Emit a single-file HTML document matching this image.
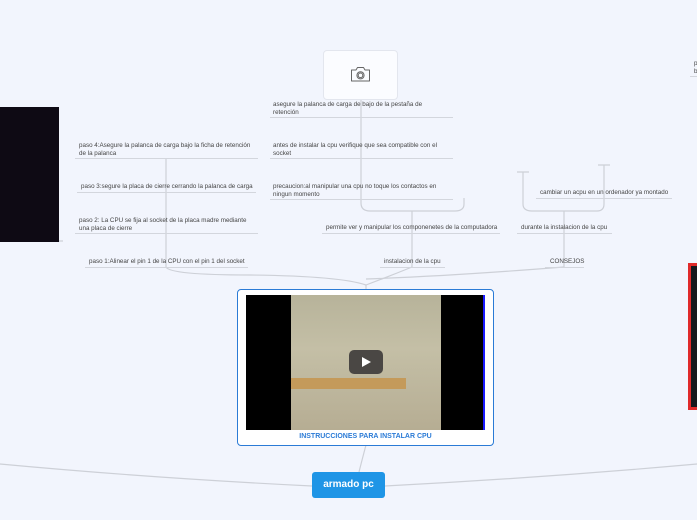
<!DOCTYPE html>
<html><head><meta charset="utf-8"><style>
body{margin:0;width:697px;height:520px;background:#f2f5fd;position:relative;overflow:hidden;font-family:"Liberation Sans",sans-serif}
.t{position:absolute;font-size:6.25px;line-height:7.5px;color:#444;white-space:nowrap}
.u{position:absolute;height:1px;background:#d3d6dd}
</style></head><body>
<svg width="697" height="520" style="position:absolute;left:0;top:0" fill="none" stroke="#cdd0d7" stroke-width="1.2">
<path d="M361 99V117M361 118V158M361 159V199"/>
<path d="M166 159V192M166 193V233M166 234V267"/>
<path d="M361 199V203Q361 211 370 211H455Q464 211 464 204V198"/>
<path d="M412 211V233M412 234V267"/>
<path d="M523 172V204Q523 211 532 211H597Q604 211 604 204V165M517 172H529M598 165H610"/>
<path d="M564 211V233M564 234V267"/>
<path d="M166 267Q170 275 250 275Q340 276 366 285Q390 276 412 267"/>
<path d="M366 279Q450 276 564 267"/>
<path d="M366 285V290"/>
<path d="M0 464Q150 478 312 486M385 486Q540 478 697 464"/>
<path d="M366 445Q362 460 359 472"/>
<path d="M0 241H63"/>
</svg>
<div style="position:absolute;left:323px;top:50px;width:73px;height:48px;background:#fbfcff;border:1px solid #e3e6ee;border-radius:4px"></div>
<svg style="position:absolute;left:350px;top:65px" width="21" height="18" viewBox="0 0 21 18" fill="none" stroke="#666" stroke-width="1"><path d="M1.5 5H6L7.5 2.5H13.5L15 5H19.5V16H1.5Z" stroke-linejoin="round"/><circle cx="10.5" cy="10.3" r="3.6"/><circle cx="10.5" cy="10.3" r="2.3"/></svg>
<div style="position:absolute;left:0;top:107px;width:59px;height:135px;background:#0e0a14"></div>
<div style="position:absolute;left:688px;top:263px;width:9px;height:147px;background:#e02a2a"><div style="margin:3px 0 3px 3px;height:141px;background:#15171c"></div></div>
<div class="t" style="left:694px;top:60px">p<br>b</div><div class="u" style="left:690px;top:76px;width:7px"></div>

<div class="t" style="left:273px;top:101px">asegure la palanca de carga de bajo de la pestaña de<br>retención</div><div class="u" style="left:270px;top:117px;width:183px"></div>
<div class="t" style="left:273px;top:142px">antes de instalar la cpu verifique que sea compatible con el<br>socket</div><div class="u" style="left:270px;top:158px;width:183px"></div>
<div class="t" style="left:273px;top:183px">precaucion:al manipular una cpu no toque los contactos en<br>ningun momento</div><div class="u" style="left:270px;top:199px;width:183px"></div>
<div class="t" style="left:326px;top:224px">permite ver y manipular los componenetes de la computadora</div><div class="u" style="left:322px;top:233px;width:178px"></div>
<div class="t" style="left:384px;top:258px">instalacion de la cpu</div><div class="u" style="left:380px;top:267px;width:65px"></div>
<div class="t" style="left:79px;top:142px">paso 4:Asegure la palanca de carga bajo la ficha de retención<br>de la palanca</div><div class="u" style="left:75px;top:158px;width:183px"></div>
<div class="t" style="left:81px;top:183px">paso 3:segure la placa de cierre cerrando la palanca de carga</div><div class="u" style="left:77px;top:192px;width:179px"></div>
<div class="t" style="left:79px;top:217px">paso 2: La CPU se fija al socket de la placa madre mediante<br>una placa de cierre</div><div class="u" style="left:75px;top:233px;width:183px"></div>
<div class="t" style="left:89px;top:258px">paso 1:Alinear el pin 1 de la CPU con el pin 1 del socket</div><div class="u" style="left:85px;top:267px;width:163px"></div>
<div class="t" style="left:540px;top:189px">cambiar un acpu en un ordenador ya montado</div><div class="u" style="left:536px;top:198px;width:136px"></div>
<div class="t" style="left:521px;top:224px">durante la instalacion de la cpu</div><div class="u" style="left:517px;top:233px;width:95px"></div>
<div class="t" style="left:550px;top:258px">CONSEJOS</div><div class="u" style="left:545px;top:267px;width:39px"></div>

<div style="position:absolute;left:237px;top:289px;width:255px;height:155px;background:#fff;border:1px solid #2b7bd6;border-radius:4px"></div>
<div style="position:absolute;left:246px;top:295px;width:239px;height:135px;background:#000;border-right:2px solid #1a1aff;box-sizing:border-box"></div>
<div style="position:absolute;left:291px;top:295px;width:150px;height:135px;background:linear-gradient(180deg,#b7b39a 0%,#c4bfa6 40%,#b6ad93 100%)"></div>
<div style="position:absolute;left:291px;top:378px;width:115px;height:11px;background:#c49a5a"></div>
<div style="position:absolute;left:349px;top:350px;width:34px;height:24px;background:#4a4744;border-radius:5px"></div>
<div style="position:absolute;left:362px;top:357px;width:0;height:0;border-left:9px solid #fff;border-top:5px solid transparent;border-bottom:5px solid transparent"></div>
<div style="position:absolute;left:237px;top:433px;width:257px;text-align:center;font-size:7px;font-weight:bold;color:#2b7bd6">INSTRUCCIONES PARA INSTALAR CPU</div>
<div style="position:absolute;left:312px;top:472px;width:73px;height:26px;background:#1f95e6;border-radius:3px;color:#fff;font-weight:bold;font-size:10px;line-height:26px;text-align:center">armado pc</div>
</body></html>
